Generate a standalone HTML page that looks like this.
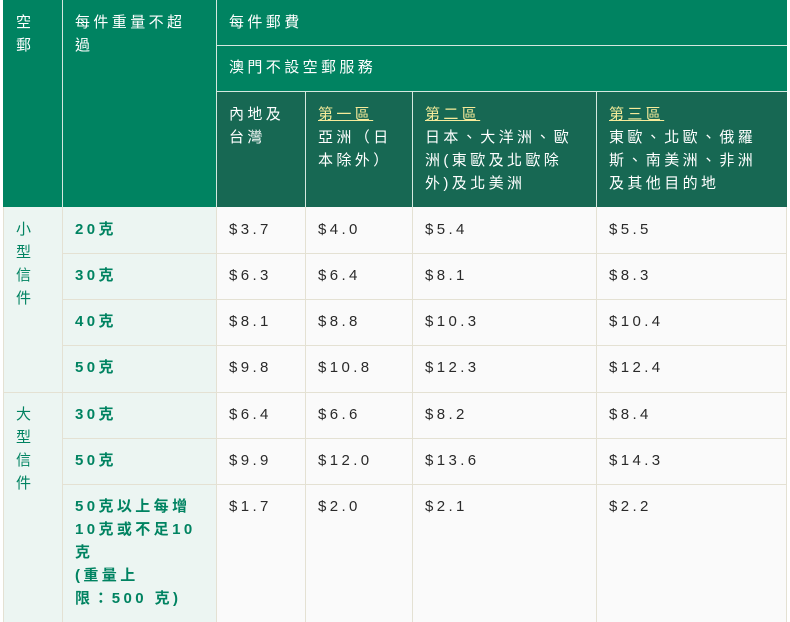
<!DOCTYPE html>
<html style="height:622px;overflow:hidden"><head><meta charset="utf-8"><style>
body{margin:0;width:790px;height:622px;background:#fff;overflow:hidden;font-family:"Liberation Sans","Noto Sans CJK TC",sans-serif;position:relative;}
.c{position:absolute;box-sizing:border-box;padding:11px 0 0 13px;font-size:15px;line-height:23px;letter-spacing:3.4px;}
.h{background:#008361;color:#fff;}
.d{background:#176853;color:#fff;padding-top:12px;}
.l{background:#ecf5f2;color:#008361;font-weight:bold;}
.v{background:#fafafa;color:#2a2a2a;}
.ln{position:absolute;background:#e4e1d3;z-index:5;}
.lh{position:absolute;background:#d4e8df;z-index:5;}
u{color:#f6eb9a;text-decoration:underline;text-decoration-color:#f6eb9a;}
</style></head><body>
<div class="c h" style="left:3px;top:0;width:59px;height:207px">空<br>郵</div>
<div class="c h" style="left:62px;top:0;width:154px;height:207px">每件重量不超<br>過</div>
<div class="c h" style="left:216px;top:0;width:571px;height:45px">每件郵費</div>
<div class="c h" style="left:216px;top:45px;width:571px;height:46px">澳門不設空郵服務</div>
<div class="c d" style="left:216px;top:91px;width:89px;height:116px">內地及<br>台灣</div>
<div class="c d" style="left:305px;top:91px;width:107px;height:116px"><u>第一區</u><br>亞洲（日<br>本除外）</div>
<div class="c d" style="left:412px;top:91px;width:184px;height:116px"><u>第二區</u><br>日本、大洋洲、歐<br>洲(東歐及北歐除<br>外)及北美洲</div>
<div class="c d" style="left:596px;top:91px;width:191px;height:116px"><u>第三區</u><br>東歐、北歐、俄羅<br>斯、南美洲、非洲<br>及其他目的地</div>

<div class="c l" style="left:3px;top:207px;width:59px;height:185px;font-weight:normal">小<br>型<br>信<br>件</div>
<div class="c l" style="left:3px;top:392px;width:59px;height:230px;font-weight:normal">大<br>型<br>信<br>件</div>

<div class="c l" style="left:62px;top:207px;width:154px;height:46px">20克</div>
<div class="c l" style="left:62px;top:253px;width:154px;height:46px">30克</div>
<div class="c l" style="left:62px;top:299px;width:154px;height:46px">40克</div>
<div class="c l" style="left:62px;top:345px;width:154px;height:47px">50克</div>
<div class="c l" style="left:62px;top:392px;width:154px;height:46px">30克</div>
<div class="c l" style="left:62px;top:438px;width:154px;height:46px">50克</div>
<div class="c l" style="left:62px;top:484px;width:154px;height:138px">50克以上每增<br>10克或不足10<br>克<br>(重量上<br>限：500 克)</div>

<div id="vals"></div>

<div class="lh" style="left:62px;top:0;width:1px;height:207px"></div>
<div class="lh" style="left:216px;top:0;width:1px;height:207px"></div>
<div class="lh" style="left:216px;top:45px;width:571px;height:1px"></div>
<div class="lh" style="left:216px;top:91px;width:571px;height:1px"></div>
<div class="lh" style="left:305px;top:91px;width:1px;height:116px"></div>
<div class="lh" style="left:412px;top:91px;width:1px;height:116px"></div>
<div class="lh" style="left:596px;top:91px;width:1px;height:116px"></div>
<div class="ln" style="left:3px;top:207px;width:1px;height:415px"></div>
<div class="ln" style="left:62px;top:207px;width:1px;height:415px"></div>
<div class="ln" style="left:216px;top:207px;width:1px;height:415px"></div>
<div class="ln" style="left:305px;top:207px;width:1px;height:415px"></div>
<div class="ln" style="left:412px;top:207px;width:1px;height:415px"></div>
<div class="ln" style="left:596px;top:207px;width:1px;height:415px"></div>
<div class="ln" style="left:786px;top:207px;width:1px;height:415px"></div>
<div class="ln" style="left:62px;top:253px;width:725px;height:1px"></div>
<div class="ln" style="left:62px;top:299px;width:725px;height:1px"></div>
<div class="ln" style="left:62px;top:345px;width:725px;height:1px"></div>
<div class="ln" style="left:3px;top:392px;width:784px;height:1px"></div>
<div class="ln" style="left:62px;top:438px;width:725px;height:1px"></div>
<div class="ln" style="left:62px;top:484px;width:725px;height:1px"></div>
<script>
var cols=[[216,89],[305,107],[412,184],[596,190]];
var rows=[[207,46],[253,46],[299,46],[345,47],[392,46],[438,46],[484,138]];
var data=[["$3.7","$4.0","$5.4","$5.5"],["$6.3","$6.4","$8.1","$8.3"],["$8.1","$8.8","$10.3","$10.4"],["$9.8","$10.8","$12.3","$12.4"],["$6.4","$6.6","$8.2","$8.4"],["$9.9","$12.0","$13.6","$14.3"],["$1.7","$2.0","$2.1","$2.2"]];
var h="";
for(var r=0;r<7;r++)for(var c=0;c<4;c++){h+='<div class="c v" style="left:'+cols[c][0]+'px;top:'+rows[r][0]+'px;width:'+cols[c][1]+'px;height:'+rows[r][1]+'px">'+data[r][c]+'</div>';}
document.getElementById("vals").innerHTML=h;
</script>
</body></html>
